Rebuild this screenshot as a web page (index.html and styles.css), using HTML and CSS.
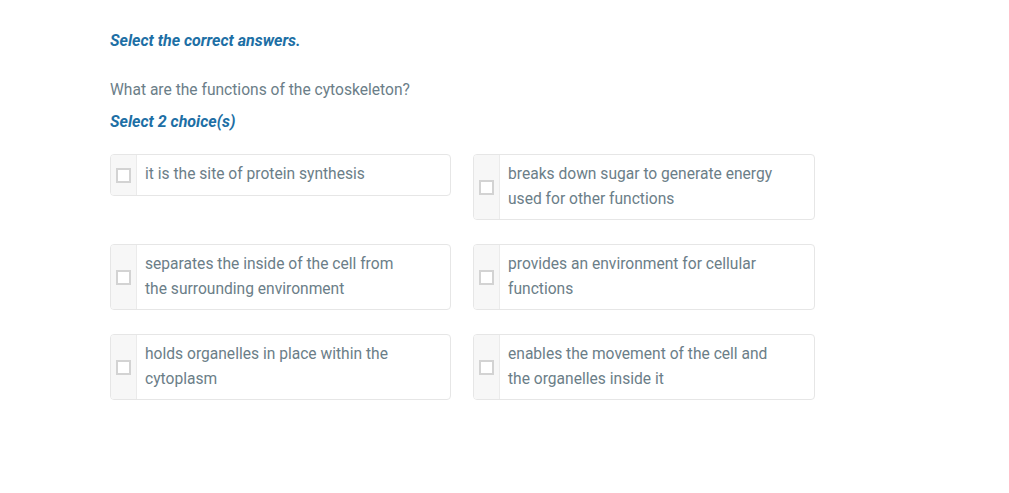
FILE: index.html
```html
<!DOCTYPE html>
<html>
<head>
<meta charset="utf-8">
<link rel="stylesheet" href="styles.css">
</head>
<body>
<main class="quiz">
  <h2 class="instr">Select the correct answers.</h2>
  <p class="question">What are the functions of the cytoskeleton?</p>
  <p class="count">Select 2 choice(s)</p>
  <div class="choices">
    <label class="choice"><span class="box"><span class="check"></span></span><span class="text">it is the site of protein synthesis</span></label>
    <label class="choice"><span class="box"><span class="check"></span></span><span class="text">breaks down sugar to generate energy used for other functions</span></label>
    <label class="choice"><span class="box"><span class="check"></span></span><span class="text">separates the inside of the cell from the surrounding environment</span></label>
    <label class="choice"><span class="box"><span class="check"></span></span><span class="text">provides an environment for cellular functions</span></label>
    <label class="choice"><span class="box"><span class="check"></span></span><span class="text">holds organelles in place within the cytoplasm</span></label>
    <label class="choice"><span class="box"><span class="check"></span></span><span class="text">enables the movement of the cell and the organelles inside it</span></label>
  </div>
</main>
</body>
</html>
```
FILE: styles.css
```css
html, body {
  margin: 0;
  padding: 0;
  background: #ffffff;
}
body {
  font-family: Roboto, "Liberation Sans", sans-serif;
  color: #6b7e88;
}
.quiz {
  padding: 31px 0 0 110px;
  width: 705px;
}
.instr {
  margin: 0;
  font-size: 16px;
  font-weight: 700;
  font-style: italic;
  color: #1d6fa5;
  line-height: 20px;
}
.question {
  margin: 29px 0 0 0;
  font-size: 15.6px;
  line-height: 20px;
  color: #6b7e88;
}
.count {
  margin: 12px 0 0 0;
  font-size: 16px;
  font-weight: 700;
  font-style: italic;
  color: #1d6fa5;
  line-height: 20px;
}
.choices {
  margin-top: 22px;
  display: grid;
  grid-template-columns: 341px 342px;
  column-gap: 22px;
  row-gap: 24px;
  align-items: start;
}
.choice {
  display: flex;
  box-sizing: border-box;
  min-height: 42px;
  border: 1px solid #e6e6e6;
  border-radius: 4px;
  background: #fff;
  overflow: hidden;
}
.box {
  flex: 0 0 25px;
  background: #f7f7f7;
  border-right: 1px solid #ebebeb;
  display: flex;
  align-items: center;
  justify-content: center;
}
.check {
  width: 11px;
  height: 11px;
  border: 2px solid #d3d3d3;
  background: #fff;
}
.text {
  padding: 7px 38px 7px 8px;
  font-size: 15.6px;
  line-height: 25px;
  color: #6b7e88;
}
```
